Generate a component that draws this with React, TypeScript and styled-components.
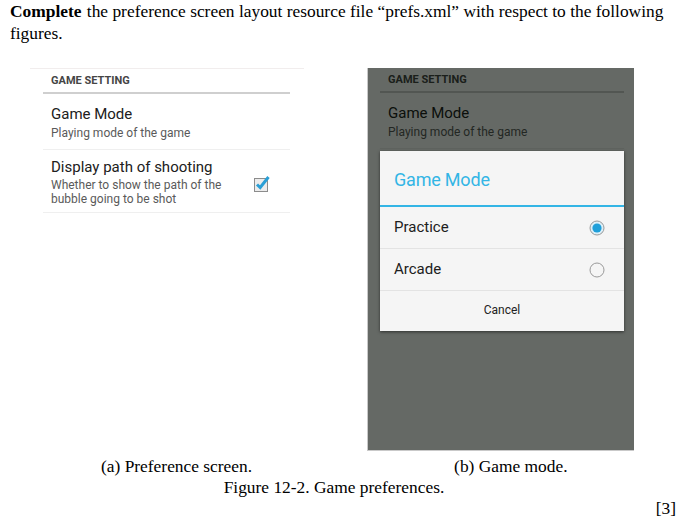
import React from "react";
import styled, { createGlobalStyle } from "styled-components";

const Global = createGlobalStyle`
  html, body { margin: 0; padding: 0; background: #ffffff; }
  body { font-family: "Liberation Serif", "Times New Roman", serif; color: #000; }
`;

const Page = styled.div`
  width: 684px;
  height: 529px;
  padding: 1px 8px 0 10px;
  box-sizing: border-box;
  font-family: "Liberation Serif", "Times New Roman", serif;
  font-size: 17.4px;
  line-height: 21.5px;
`;

const Intro = styled.p`
  margin: 0;
  width: 666px;
`;

const Strong = styled.b`
  font-weight: 700;
  margin-right: 1px;
`;

const Figures = styled.div`
  display: flex;
  align-items: flex-start;
  margin-top: 24px;
`;

const LeftFigure = styled.div`
  margin-left: 20px;
  width: 274px;
  border-top: 1px solid #f1eded;
  box-sizing: border-box;
  background: #fff;
`;

const DeviceFrame = styled.div`
  position: relative;
  margin-left: 63px;
  width: 267px;
  height: 383px;
  box-sizing: border-box;
  border-left: 1px solid #c9c9c9;
  border-bottom: 1px solid #c9c9c9;
  background: #fff;
  overflow: hidden;
`;

const PrefList = styled.div<{ $padL: number; $padR: number }>`
  padding: 0 ${(p) => p.$padR}px 0 ${(p) => p.$padL}px;
  font-family: Roboto, "Noto Sans", sans-serif;
`;

const CategoryHeader = styled.div`
  height: 23px;
  padding: 0 8px;
  display: flex;
  align-items: center;
  font-size: 11px;
  font-weight: 700;
  color: #454545;
  border-bottom: 2px solid #cfcfcf;
`;

const PrefRow = styled.div<{ $pt: number; $pb: number }>`
  display: flex;
  align-items: center;
  padding: ${(p) => p.$pt}px 0 ${(p) => p.$pb}px 8px;
  border-bottom: 1px solid #efefef;
`;

const PrefText = styled.div`
  flex: 1;
  display: flex;
  flex-direction: column;
`;

const PrefTitle = styled.div`
  font-size: 15px;
  line-height: 20px;
  color: #202020;
`;

const PrefSummary = styled.div<{ $lh: number; $mt: number }>`
  margin-top: ${(p) => p.$mt}px;
  font-size: 12px;
  line-height: ${(p) => p.$lh}px;
  color: #5a5a5a;
  max-width: 190px;
`;

const CheckWrap = styled.div`
  width: 18px;
  height: 18px;
  margin-right: 19px;
  margin-top: 2px;
  display: flex;
`;

const Scrim = styled.div`
  position: absolute;
  inset: 0;
  background: rgba(0, 6, 0, 0.605);
`;

const Dialog = styled.div`
  position: absolute;
  left: 12px;
  top: 83px;
  width: 244px;
  background: #f5f5f5;
  box-shadow: 0 1px 3px rgba(0, 0, 0, 0.55);
  font-family: Roboto, "Noto Sans", sans-serif;
`;

const DialogTitle = styled.div`
  height: 51px;
  padding: 3px 0 0 14px;
  display: flex;
  align-items: center;
  font-size: 18px;
  color: #33b5e5;
  letter-spacing: -0.2px;
  border-bottom: 2px solid #33b5e5;
`;

const Option = styled.div`
  height: 41px;
  padding: 0 19px 0 14px;
  display: flex;
  align-items: center;
  justify-content: space-between;
  font-size: 15px;
  color: #202020;
  border-bottom: 1px solid #e3e3e3;
`;

const OptionLabel = styled.span`
  padding-top: 1px;
`;

const CancelButton = styled.div`
  height: 40px;
  display: flex;
  align-items: center;
  justify-content: center;
  font-size: 12px;
  color: #222;
`;

const Captions = styled.div`
  display: flex;
  margin-top: 5px;
  line-height: 21px;
`;

const SubCaption = styled.span<{ $left: number }>`
  margin-left: ${(p) => p.$left}px;
`;

const FigureCaption = styled.div`
  text-align: center;
  line-height: 21px;
  padding-right: 18px;
`;

const PageNumber = styled.div`
  text-align: right;
  line-height: 21px;
`;

const Checkbox = () => (
  <svg width="18" height="18" viewBox="0 0 18 18">
    <rect x="1.5" y="4.5" width="13" height="13" fill="#ececec" stroke="#8c8c8c" />
    <path d="M4 10.5 L7.2 13.5 L15.5 3" fill="none" stroke="#2a9fd6" strokeWidth="3" strokeLinejoin="miter" />
  </svg>
);

const Radio = ({ checked }: { checked: boolean }) => (
  <svg width="16" height="16" viewBox="0 0 16 16">
    <circle cx="8" cy="8" r="7" fill={checked ? "#dcefF8" : "none"} stroke="#9a9a9a" strokeWidth="1" />
    {checked && <circle cx="8" cy="8" r="4.6" fill="#1f9fd9" />}
  </svg>
);

const Screen = () => (
  <>
    <CategoryHeader>GAME SETTING</CategoryHeader>
    <PrefRow $pt={10} $pb={8}>
      <PrefText>
        <PrefTitle>Game Mode</PrefTitle>
        <PrefSummary $lh={16} $mt={1}>Playing mode of the game</PrefSummary>
      </PrefText>
    </PrefRow>
    <PrefRow $pt={7} $pb={6}>
      <PrefText>
        <PrefTitle>Display path of shooting</PrefTitle>
        <PrefSummary $lh={13.5} $mt={2}>Whether to show the path of the bubble going to be shot</PrefSummary>
      </PrefText>
      <CheckWrap>
        <Checkbox />
      </CheckWrap>
    </PrefRow>
  </>
);

export default function App() {
  return (
    <>
      <Global />
      <Page>
        <Intro>
          <Strong>Complete</Strong> the preference screen layout resource file “prefs.xml” with respect to the following figures.
        </Intro>
        <Figures>
          <LeftFigure>
            <PrefList $padL={13} $padR={14}>
              <Screen />
            </PrefList>
          </LeftFigure>
          <DeviceFrame>
            <PrefList $padL={12} $padR={10}>
              <Screen />
            </PrefList>
            <Scrim />
            <Dialog>
              <DialogTitle>Game Mode</DialogTitle>
              <Option>
                <OptionLabel>Practice</OptionLabel>
                <Radio checked />
              </Option>
              <Option>
                <OptionLabel>Arcade</OptionLabel>
                <Radio checked={false} />
              </Option>
              <CancelButton>Cancel</CancelButton>
            </Dialog>
          </DeviceFrame>
        </Figures>
        <Captions>
          <SubCaption $left={91}>(a) Preference screen.</SubCaption>
          <SubCaption $left={202}>(b) Game mode.</SubCaption>
        </Captions>
        <FigureCaption>Figure 12-2. Game preferences.</FigureCaption>
        <PageNumber>[3]</PageNumber>
      </Page>
    </>
  );
}
